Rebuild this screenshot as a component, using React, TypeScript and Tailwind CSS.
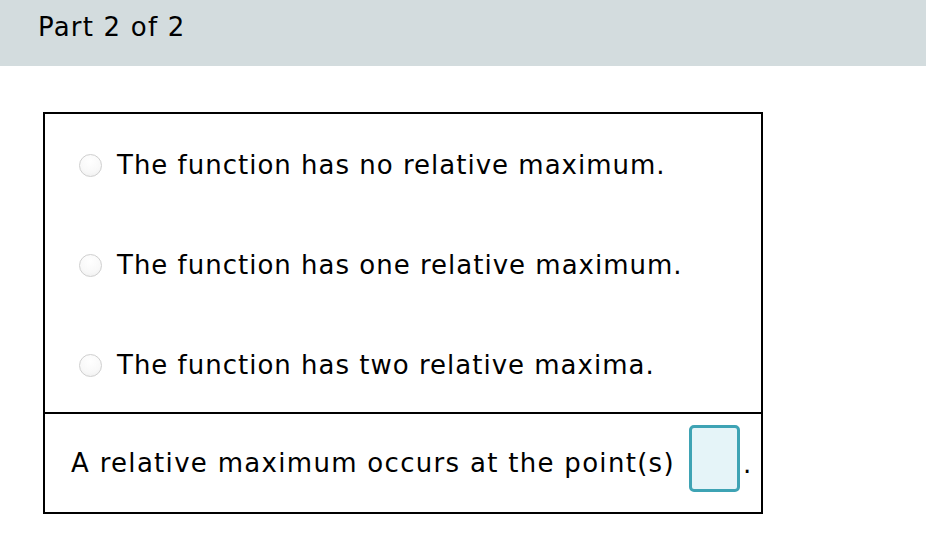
import React from 'react';

const options = [
  'The function has no relative maximum.',
  'The function has one relative maximum.',
  'The function has two relative maxima.',
];

function Radio() {
  return (
    <span className="inline-block w-[23px] h-[23px] rounded-full border border-[#cfcfcf] bg-[radial-gradient(circle_at_50%_30%,_#ffffff_0%,_#f8f8f8_60%,_#ececec_100%)] shrink-0" />
  );
}

export default function App() {
  return (
    <div className="w-[926px] h-[546px] bg-white text-black font-['DejaVu_Sans',Verdana,sans-serif] text-[26px] leading-none tracking-[1px]">
      <div className="h-[66px] bg-[#d3dcde] pl-[38px] pt-[14px] tracking-[1.2px]">Part 2 of 2</div>
      <div className="ml-[43px] mt-[46px] w-[720px] border-2 border-black">
        <div className="flex flex-col pt-[39px] pb-[35px] gap-[76px]">
          {options.map((o, i) => (
            <label key={i} className="flex items-center pl-[34px] h-[24px]">
              <Radio />
              <span className="ml-[15px]">{o}</span>
            </label>
          ))}
        </div>
        <div className="border-t-2 border-black h-[100px] flex items-center pl-[26px]">
          <span className="tracking-[1.3px]">A relative maximum occurs at the point(s)</span>
          <span className="ml-[14px] mb-[9px] w-[51px] h-[67px] rounded-[5px] border-[3px] border-[#3ea3b4] bg-[#e5f4f8]" />
          <span className="ml-[3px] mt-[2px]">.</span>
        </div>
      </div>
    </div>
  );
}
